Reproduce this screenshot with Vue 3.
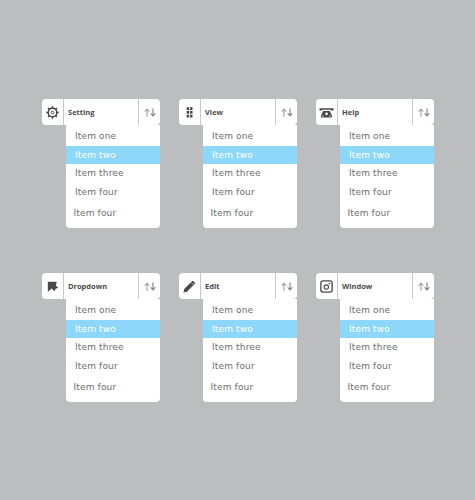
<template>
  <div class="page">
    <div v-for="menu in menus" :key="menu.title" class="dropdown">
      <div class="head">
        <div class="icon">
          <svg viewBox="0 0 16 16" width="15" height="15" v-html="menu.icon"></svg>
        </div>
        <div class="title">{{ menu.title }}</div>
        <div class="sort">
          <svg viewBox="0 0 16 12" width="12" height="9">
            <path d="M4 11.5V1.5M.8 5l3.2-3.6L7.2 5" fill="none" stroke="#a0a0a0" stroke-width="1.5" />
            <path d="M12 .5v10M8.8 7l3.2 3.6L15.2 7" fill="none" stroke="#808080" stroke-width="1.5" />
          </svg>
        </div>
      </div>
      <ul class="list">
        <li>Item one</li>
        <li class="active">Item two</li>
        <li>Item three</li>
        <li>Item four</li>
        <li class="last">Item four</li>
      </ul>
    </div>
  </div>
</template>

<script setup>
const gear = `<circle cx="8" cy="8" r="4.6" fill="none" stroke="#484848" stroke-width="1.6"/><circle cx="8" cy="8" r="1.5" fill="none" stroke="#484848" stroke-width="1"/><path d="M8 1.3v2M8 12.7v2M1.3 8h2M12.7 8h2M3.3 3.3l1.4 1.4M11.3 11.3l1.4 1.4M12.7 3.3l-1.4 1.4M4.7 11.3l-1.4 1.4" stroke="#484848" stroke-width="1.7"/>`
const grid = `<path d="M5 2.5h2.6v2.8H5zM8.6 2.5h2.6v2.8H8.6zM5 6.5h2.6v2.8H5zM8.6 6.5h2.6v2.8H8.6zM5 10.5h2.6v2.8H5zM8.6 10.5h2.6v2.8H8.6z" fill="#484848"/>`
const phone = `<path d="M0.5 3.5h15v2.4h-3V5H3.5v.9h-3z" fill="#484848"/><path d="M4.5 6.5h7l2.5 5.3v1.5H2v-1.5z" fill="#484848"/><circle cx="8" cy="9.4" r="1.5" fill="#fff"/><path d="M3 11.8h2.2M10.8 11.8H13" stroke="#fff" stroke-width=".8"/>`
const cursor = `<path d="M3 3H12.5L11.6 7 14 9.4 11.4 10.4 10.2 13 7.2 10.2 3 13.5z" fill="#484848"/>`
const pencil = `<path d="M1.5 14.5l.9-3.8 8.2-8.2c.5-.5 1.2-.5 1.7 0l1.2 1.2c.5.5.5 1.2 0 1.7l-8.2 8.2z" fill="#484848"/><path d="M9.6 3.6l2.8 2.8" stroke="#fff" stroke-width=".7"/>`
const camera = `<rect x="2" y="2" width="12" height="12" rx="2.2" fill="none" stroke="#484848" stroke-width="1.4"/><circle cx="7.8" cy="8.6" r="2.3" fill="none" stroke="#484848" stroke-width="1.2"/><circle cx="11.2" cy="4.8" r=".9" fill="#484848"/>`

const menus = [
  { title: 'Setting', icon: gear },
  { title: 'View', icon: grid },
  { title: 'Help', icon: phone },
  { title: 'Dropdown', icon: cursor },
  { title: 'Edit', icon: pencil },
  { title: 'Window', icon: camera },
]
</script>

<style>
body {
  background: #bcbdbf;
}
</style>

<style scoped>
.page {
  width: 475px;
  height: 500px;
  box-sizing: border-box;
  background: #bcbdbf;
  padding: 99px 41px 0 42px;
  display: grid;
  grid-template-columns: repeat(3, 118px);
  grid-auto-rows: 129px;
  column-gap: 19px;
  row-gap: 45px;
  font-family: "DejaVu Sans", sans-serif;
}

.dropdown {
  width: 118px;
}

.head {
  display: flex;
  height: 26px;
  background: #fff;
  border-radius: 4px;
  overflow: hidden;
}

.icon {
  width: 21px;
  border-right: 1px solid #c8c8c8;
  display: flex;
  align-items: center;
  justify-content: center;
}

.title {
  flex: 1;
  padding-left: 4px;
  line-height: 26px;
  font-family: "Open Sans", sans-serif;
  font-size: 7.5px;
  font-weight: 700;
  color: #4a4a4a;
}

.sort {
  width: 21px;
  border-left: 1px solid #c8c8c8;
  display: flex;
  align-items: center;
  justify-content: center;
}

.list {
  list-style: none;
  margin: 0 0 0 23.5px;
  padding: 0;
  width: 94px;
  height: 103px;
  box-sizing: border-box;
  background: #fff;
  border-radius: 0 0 4px 4px;
  font-size: 9px;
  color: #6e6e6e;
}

.list li {
  height: 18.5px;
  line-height: 18.5px;
  padding-left: 9.5px;
  letter-spacing: 0.15px;
}

.list li:first-child {
  height: 21px;
  line-height: 22px;
}

.list .active {
  height: 18px;
  line-height: 18px;
  background: #8dd7fb;
  color: #fff;
}

.list .last {
  height: 27px;
  line-height: 24px;
  padding-left: 8px;
}
</style>
